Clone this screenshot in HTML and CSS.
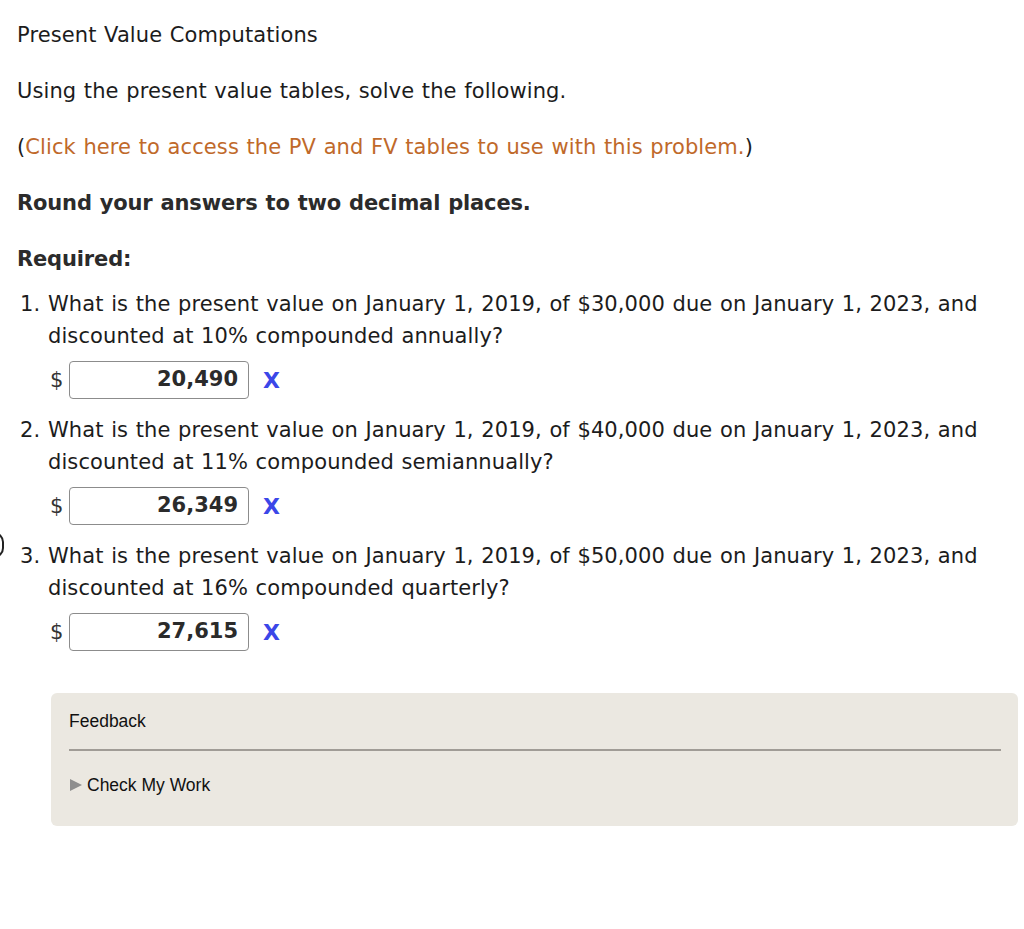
FILE: index.html
```html
<!DOCTYPE html>
<html>
<head>
<meta charset="utf-8">
<link rel="stylesheet" href="styles.css">
</head>
<body>
<span class="edge"></span>
<div class="page">
  <p class="para">Present Value Computations</p>
  <p class="para">Using the present value tables, solve the following.</p>
  <p class="para">(<a class="link" href="#">Click here to access the PV and FV tables to use with this problem.</a>)</p>
  <p class="para bold">Round your answers to two decimal places.</p>
  <p class="para bold req">Required:</p>
  <ol class="list">
    <li class="item">
      <span class="num">1.</span>
      <div class="body">
        <div class="q">What is the present value on January 1, 2019, of $30,000 due on January 1, 2023, and discounted at 10% compounded annually?</div>
        <div class="ans"><span class="cur">$</span><span class="box">20,490</span><span class="wrong">X</span></div>
      </div>
    </li>
    <li class="item">
      <span class="num">2.</span>
      <div class="body">
        <div class="q">What is the present value on January 1, 2019, of $40,000 due on January 1, 2023, and discounted at 11% compounded semiannually?</div>
        <div class="ans"><span class="cur">$</span><span class="box">26,349</span><span class="wrong">X</span></div>
      </div>
    </li>
    <li class="item">
      <span class="num">3.</span>
      <div class="body">
        <div class="q">What is the present value on January 1, 2019, of $50,000 due on January 1, 2023, and discounted at 16% compounded quarterly?</div>
        <div class="ans"><span class="cur">$</span><span class="box">27,615</span><span class="wrong">X</span></div>
      </div>
    </li>
  </ol>
  <div class="feedback">
    <div class="fb-title">Feedback</div>
    <div class="fb-rule"></div>
    <div class="fb-check"><span class="tri"></span>Check My Work</div>
  </div>
</div>
</body>
</html>
```
FILE: styles.css
```css
html, body {
  margin: 0;
  padding: 0;
  background: #ffffff;
}
body {
  font-family: "DejaVu Sans", Verdana, sans-serif;
  font-size: 21px;
  letter-spacing: 0.1px;
  word-spacing: 0.8px;
  color: #1c1c1c;
  position: relative;
}
.edge {
  position: absolute;
  left: -6px;
  top: 532px;
  width: 8px;
  height: 22px;
  border: 2px solid #222;
  border-left: none;
  border-radius: 0 12px 12px 0;
}
.page {
  padding: 19px 6px 0 17px;
}
.para {
  margin: 0 0 24px 0;
  line-height: 32px;
}
.bold {
  font-weight: bold;
  color: #2b2b2b;
  letter-spacing: -0.15px;
}
.req {
  margin-bottom: 13px;
}
.link {
  color: #c0692a;
  text-decoration: none;
}
.list {
  margin: 0;
  padding: 0;
  list-style: none;
}
.item {
  display: flex;
  margin-bottom: 15px;
}
.num {
  width: 28px;
  margin-left: 3px;
  line-height: 32px;
  flex: none;
}
.body {
  flex: 1;
}
.q {
  line-height: 32px;
}
.ans {
  display: flex;
  align-items: center;
  margin-top: 9px;
  height: 38px;
}
.cur {
  width: 19px;
  margin-left: 2px;
  color: #333;
}
.box {
  box-sizing: border-box;
  width: 180px;
  height: 38px;
  border: 1.5px solid #8c8c8c;
  border-radius: 4px;
  text-align: right;
  font-weight: bold;
  color: #2b2b2b;
  padding-right: 10px;
  line-height: 35px;
  letter-spacing: 0;
}
.wrong {
  margin-left: 14px;
  color: #3b47e8;
  font-weight: bold;
  font-size: 22px;
}
.feedback {
  margin: 42px 0 0 34px;
  background: #ebe8e1;
  border-radius: 6px;
  height: 133px;
  box-sizing: border-box;
  padding: 17px 17px 0 18px;
  font-family: "Liberation Sans", Arial, sans-serif;
  font-size: 17.5px;
  letter-spacing: 0;
  word-spacing: 0;
  color: #111;
}
.fb-title {
  line-height: 22px;
}
.fb-rule {
  height: 2px;
  background: #a09c96;
  margin-top: 17px;
}
.fb-check {
  margin-top: 23px;
  line-height: 22px;
  display: flex;
  align-items: center;
}
.tri {
  width: 0;
  height: 0;
  border-top: 6px solid transparent;
  border-bottom: 6px solid transparent;
  border-left: 12px solid #8e8e8e;
  margin-right: 5px;
  margin-left: 1px;
}
```
